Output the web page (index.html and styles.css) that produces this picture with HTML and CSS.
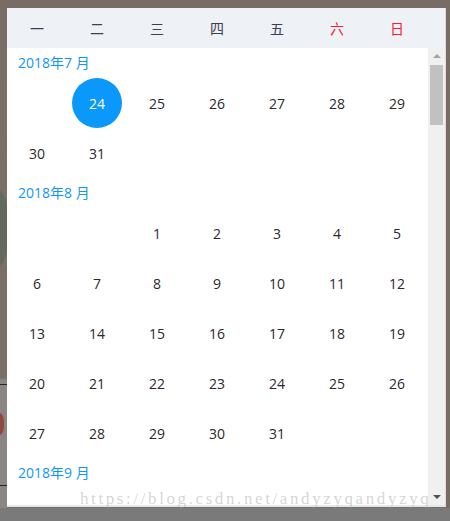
FILE: index.html
```html
<!DOCTYPE html>
<html lang="zh">
<head>
<meta charset="utf-8">
<link rel="stylesheet" href="styles.css">
</head>
<body>
<div class="stage">
  <div class="side"><span class="blob-g"></span><span class="line l1"></span><span class="blob-r"></span><span class="line l2"></span></div>
  <div class="panel">
    <div class="week">
      <span>一</span><span>二</span><span>三</span><span>四</span><span>五</span><span class="red">六</span><span class="red">日</span>
    </div>
    <div class="body">
      <div class="scroll">
        <div class="month">2018年7 月</div>
        <div class="days">
          <span class="c2"><b class="sel">24</b></span><span>25</span><span>26</span><span>27</span><span>28</span><span>29</span>
          <span>30</span><span>31</span>
        </div>
        <div class="month">2018年8 月</div>
        <div class="days">
          <span class="c3">1</span><span>2</span><span>3</span><span>4</span><span>5</span>
          <span>6</span><span>7</span><span>8</span><span>9</span><span>10</span><span>11</span><span>12</span>
          <span>13</span><span>14</span><span>15</span><span>16</span><span>17</span><span>18</span><span>19</span>
          <span>20</span><span>21</span><span>22</span><span>23</span><span>24</span><span>25</span><span>26</span>
          <span>27</span><span>28</span><span>29</span><span>30</span><span>31</span>
        </div>
        <div class="month">2018年9 月</div>
      </div>
      <div class="bar">
        <i class="up"></i>
        <i class="thumb"></i>
        <i class="fill"></i>
        <i class="down"></i>
      </div>
    </div>
    <div class="mark">https://blog.csdn.net/andyzyqandyzyq</div>
  </div>
</div>
</body>
</html>
```
FILE: styles.css
```css
html, body {
  margin: 0;
  padding: 0;
}
body {
  width: 450px;
  height: 521px;
  overflow: hidden;
  background: #7a7a7a;
  font-family: "Open Sans", "Noto Sans CJK SC", sans-serif;
}
.stage {
  position: relative;
  display: flex;
  width: 450px;
  height: 508px;
  background: #776d64;
  padding-top: 8px;
  box-sizing: border-box;
}
.side {
  position: relative;
  width: 7px;
  height: 500px;
  background: linear-gradient(#786e65 0, #7a7068 370px, #8a8683 372px, #8a8683 500px);
  overflow: hidden;
}
.blob-g {
  position: absolute;
  left: -20px;
  top: 180px;
  width: 30px;
  height: 80px;
  border-radius: 50%;
  background: #616a5c;
}
.blob-r {
  position: absolute;
  left: -8px;
  top: 405px;
  width: 12px;
  height: 22px;
  border-radius: 40%;
  background: #8e4a42;
}
.line {
  position: absolute;
  left: 0;
  width: 7px;
  height: 1px;
  background: #222;
}
.l1 { top: 376px; }
.l2 { top: 477px; }
.panel {
  position: relative;
  width: 439px;
  height: 499px;
  background: #fff;
  border-right: 1px solid #dcdcdc;
  border-bottom: 2px solid #e4e6ea;
  box-sizing: border-box;
  display: flex;
  flex-direction: column;
}
.week {
  height: 40px;
  background: #eef1f6;
  display: grid;
  grid-template-columns: repeat(7, 60px);
  align-items: center;
  justify-items: center;
  font-size: 14px;
  color: #3a4250;
  flex: none;
}
.week .red {
  color: #f5222d;
}
.body {
  flex: 1;
  display: flex;
  min-height: 0;
}
.scroll {
  width: 422px;
  overflow: hidden;
}
.month {
  height: 30px;
  line-height: 30px;
  padding-left: 11px;
  font-size: 14px;
  color: #1296f3;
}
.days {
  display: grid;
  grid-template-columns: repeat(7, 60px);
  grid-auto-rows: 50px;
  align-items: center;
  justify-items: center;
  font-size: 14px;
  color: #2a2a2a;
}
.days .c2 { grid-column-start: 2; }
.days .c3 { grid-column-start: 3; }
.sel {
  display: flex;
  align-items: center;
  justify-content: center;
  width: 50px;
  height: 50px;
  border-radius: 50%;
  background: #0a98fb;
  color: #fff;
  font-weight: normal;
}
.bar {
  width: 17px;
  background: #f0f0f0;
  display: flex;
  flex-direction: column;
  align-items: center;
}
.bar i { display: block; }
.up {
  margin-top: 6px;
  width: 0;
  height: 0;
  border-left: 4px solid transparent;
  border-right: 4px solid transparent;
  border-bottom: 4px solid #a3a3a3;
}
.thumb {
  margin-top: 7px;
  width: 13px;
  height: 60px;
  background: #c1c1c1;
}
.fill { flex: 1; }
.down {
  margin-bottom: 6px;
  width: 0;
  height: 0;
  border-left: 4px solid transparent;
  border-right: 4px solid transparent;
  border-top: 4px solid #505050;
}
.mark {
  position: absolute;
  left: 73px;
  top: 481px;
  font-family: "Liberation Serif", serif;
  font-size: 17px;
  letter-spacing: 2.6px;
  color: rgba(160, 160, 160, 0.45);
  white-space: nowrap;
  pointer-events: none;
}
```
